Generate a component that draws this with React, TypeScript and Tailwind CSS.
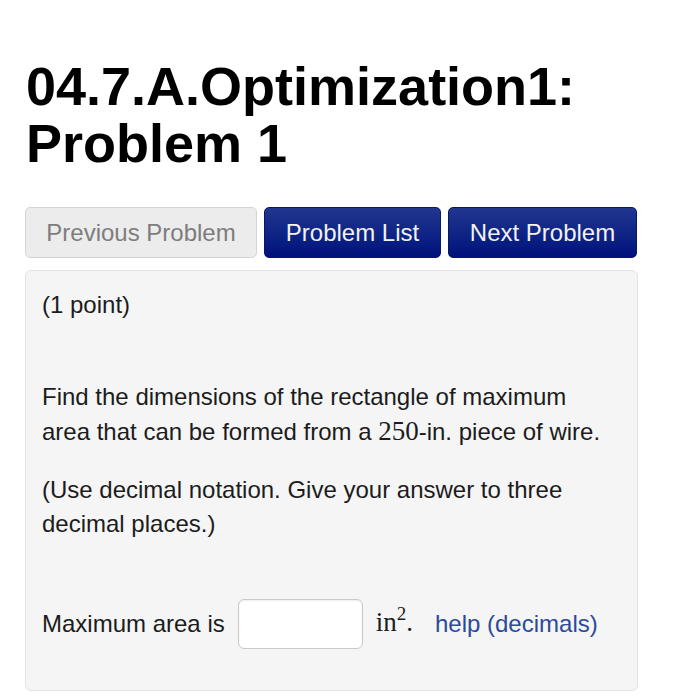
import React from "react";

export default function App() {
  return (
    <div className="w-[682px] min-h-[700px] bg-white pl-[25px] pr-[44px] pt-[58px] font-['Liberation_Sans',Arial,Helvetica,sans-serif] text-[#1a1a1a]">
      <h1 className="pl-[1px] text-[54px] leading-[57px] font-bold text-black tracking-[0px]">
        04.7.A.Optimization1:
        <br />
        Problem 1
      </h1>

      <div className="mt-[35px] flex gap-[7px]">
        <button className="h-[51px] w-[232px] rounded-[5px] border border-[#d4d4d4] bg-[#ececec] text-[24px] text-[#7d7d7d]">
          Previous Problem
        </button>
        <button className="h-[51px] w-[177px] rounded-[5px] border border-[#0b1766] bg-linear-to-b from-[#21368f] to-[#020f7c] text-[24px] text-[#f2f2f2]">
          Problem List
        </button>
        <button className="h-[51px] w-[189px] rounded-[5px] border border-[#0b1766] bg-linear-to-b from-[#21368f] to-[#020f7c] text-[24px] text-[#f2f2f2]">
          Next Problem
        </button>
      </div>

      <div className="mt-[12px] rounded-[6px] border border-[#e3e3e3] bg-[#f5f5f5] pl-[16px] pr-[30px] pt-[17px] pb-[42px] text-[24px] leading-[34px] text-[#1c1c1c]">
        <p>(1 point)</p>
        <p className="mt-[58px]">
          Find the dimensions of the rectangle of maximum area that can be formed from a{" "}
          <span className="font-['Liberation_Serif','Times_New_Roman',serif] text-[27px] leading-[34px]">250</span>
          -in. piece of wire.
        </p>
        <p className="mt-[24px]">
          (Use decimal notation. Give your answer to three decimal places.)
        </p>
        <div className="mt-[58px] flex h-[49px] items-center">
          <span>Maximum area is</span>
          <input
            type="text"
            className="ml-[13px] h-[50px] w-[125px] rounded-[6px] border border-[#c9c9c9] bg-white shadow-[inset_0_1px_2px_rgba(0,0,0,0.08)] outline-none"
          />
          <span className="ml-[13px] font-['Liberation_Serif','Times_New_Roman',serif] text-[27px] text-[#1c1c1c]">
            in
            <span className="relative -top-[11px] text-[19px]">2</span>.
          </span>
          <span className="ml-[22px] text-[#2c4a99]">help (decimals)</span>
        </div>
      </div>
    </div>
  );
}
